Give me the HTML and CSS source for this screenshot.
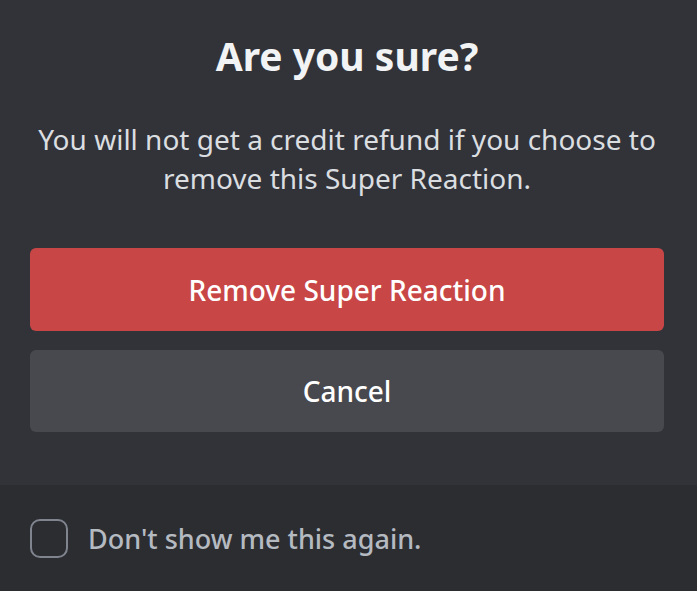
FILE: index.html
```html
<!DOCTYPE html>
<html>
<head>
<meta charset="utf-8">
<link rel="stylesheet" href="styles.css">
</head>
<body>
<div class="modal">
  <div class="content">
    <h1 class="title">Are you sure?</h1>
    <p class="desc">You will not get a credit refund if you choose to remove this Super Reaction.</p>
    <div class="actions">
      <button class="btn btn-danger">Remove Super Reaction</button>
      <button class="btn btn-secondary">Cancel</button>
    </div>
  </div>
  <div class="footer">
    <label class="check">
      <span class="box"></span>
      <span class="check-label">Don't show me this again.</span>
    </label>
  </div>
</div>
</body>
</html>
```
FILE: styles.css
```css
html, body {
  margin: 0;
  padding: 0;
  height: 100%;
  background: #313338;
}
body {
  font-family: "Noto Sans", "Open Sans", sans-serif;
}
.modal {
  display: flex;
  flex-direction: column;
  height: 591px;
  width: 697px;
}
.content {
  background: #313338;
  padding: 30px 33px 0 30px;
  height: 455px;
  display: flex;
  flex-direction: column;
  align-items: center;
}
.title {
  margin: 0;
  color: #f2f3f5;
  font-size: 39px;
  font-weight: 700;
  line-height: 52px;
  text-align: center;
}
.desc {
  margin: 38px 0 0;
  color: #dbdee1;
  font-size: 28px;
  line-height: 39px;
  text-align: center;
}
.actions {
  align-self: stretch;
  display: flex;
  flex-direction: column;
  gap: 19px;
  margin-top: 50px;
}
.btn {
  border: none;
  border-radius: 6px;
  height: 83px;
  font-family: inherit;
  font-size: 28px;
  font-weight: 500;
  color: #ffffff;
  cursor: pointer;
}
.btn-danger {
  background: #c84646;
}
.btn-secondary {
  background: #48494e;
  height: 82px;
}
.footer {
  flex: 1;
  background: #2b2d31;
  display: flex;
  align-items: center;
  padding: 0 30px;
}
.check {
  display: flex;
  align-items: center;
  gap: 20px;
}
.box {
  width: 34px;
  height: 35px;
  border: 2px solid #80848e;
  border-radius: 10px;
}
.check-label {
  color: #b5bac1;
  font-size: 27px;
  font-weight: 500;
}
```
